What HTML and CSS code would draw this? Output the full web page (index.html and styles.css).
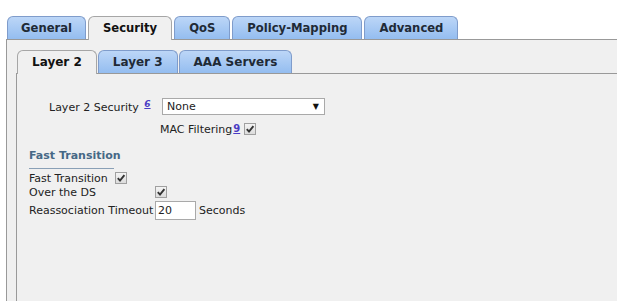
FILE: index.html
```html
<!DOCTYPE html>
<html>
<head>
<meta charset="utf-8">
<link rel="stylesheet" href="styles.css">
</head>
<body>
<div class="page">
  <div class="tabs">
    <div class="tab">General</div>
    <div class="tab active">Security</div>
    <div class="tab">QoS</div>
    <div class="tab">Policy-Mapping</div>
    <div class="tab">Advanced</div>
  </div>
  <div class="panel">
    <div class="tabs sub">
      <div class="tab active">Layer 2</div>
      <div class="tab">Layer 3</div>
      <div class="tab">AAA Servers</div>
    </div>
    <div class="panel inner">
      <div class="row sec-row">
        <span class="lbl">Layer 2 Security <a class="ref">6</a></span>
        <div class="select"><span>None</span><span class="arrow">&#9660;</span></div>
      </div>
      <div class="row mac-row">
        <span>MAC Filtering<a class="ref plain">9</a></span>
        <span class="cb"><svg viewBox="0 0 10 10" width="10" height="10"><path d="M1.8 5.2 L4 7.6 L8.4 2.2" fill="none" stroke="#333" stroke-width="1.9"/></svg></span>
      </div>
      <div class="section">
        <div class="heading">Fast Transition</div>
        <div class="row ft-row">
          <span>Fast Transition</span>
          <span class="cb"><svg viewBox="0 0 10 10" width="10" height="10"><path d="M1.8 5.2 L4 7.6 L8.4 2.2" fill="none" stroke="#333" stroke-width="1.9"/></svg></span>
        </div>
        <div class="grid">
          <span>Over the DS</span>
          <span class="cell"><span class="cb"><svg viewBox="0 0 10 10" width="10" height="10"><path d="M1.8 5.2 L4 7.6 L8.4 2.2" fill="none" stroke="#333" stroke-width="1.9"/></svg></span></span>
          <span>Reassociation Timeout</span>
          <span class="cell"><span class="input">20</span><span class="unit">Seconds</span></span>
        </div>
      </div>
    </div>
  </div>
</div>
</body>
</html>
```

FILE: styles.css
```css
html, body {
  margin: 0;
  background: #ffffff;
  height: 100%;
  overflow: hidden;
}
body {
  font-family: "DejaVu Sans", Verdana, sans-serif;
  font-size: 11px;
  color: #222;
}
.page {
  padding: 16px 0 0 6px;
  height: 100%;
  box-sizing: border-box;
  display: flex;
  flex-direction: column;
}
.tabs {
  display: flex;
  gap: 2px;
  padding-left: 1px;
  height: 23px;
  position: relative;
  z-index: 1;
}
.tab {
  box-sizing: border-box;
  height: 23px;
  padding: 0 14px;
  border: 1px solid #7f9ccb;
  border-bottom: none;
  border-radius: 6px 6px 0 0;
  background: linear-gradient(#bcd6f7, #94bdf0);
  font-weight: bold;
  font-size: 11.6px;
  line-height: 22px;
  color: #1f2a36;
  white-space: nowrap;
}
.tab:first-child {
  padding: 0 13px;
}
.tab.active {
  background: #f0f0f0;
  border-color: #a6a6a6;
  height: 24px;
  color: #111;
}
.panel {
  flex: 1;
  background: #f0f0f0;
  border-top: 1px solid #999;
  border-left: 1px solid #999;
  padding: 10px 0 0 9px;
  display: flex;
  flex-direction: column;
}
.sub {
  gap: 1px;
}
.sub .tab {
  padding: 0 14px;
  font-size: 12px;
}
.panel.inner {
  padding: 24px 0 0 0;
  display: block;
}
.row {
  display: flex;
  align-items: center;
}
.sec-row {
  padding-left: 32px;
  height: 17px;
}
.lbl {
  width: 113px;
}
.ref {
  color: #4b3cc4;
  text-decoration: underline;
  font-weight: bold;
  font-style: italic;
  font-size: 9px;
  vertical-align: 4px;
  margin-left: 2px;
}
.ref.plain {
  font-style: normal;
  vertical-align: 1px;
  margin-left: 1px;
  font-size: 10px;
}
.select {
  box-sizing: border-box;
  width: 163px;
  height: 17px;
  background: #fff;
  border: 1px solid #a9a9a9;
  display: flex;
  align-items: center;
  justify-content: space-between;
  padding: 0 5px 0 4px;
  font-size: 11px;
}
.arrow {
  font-size: 8px;
  color: #111;
}
.mac-row {
  padding-left: 143px;
  margin-top: 6px;
  height: 16px;
}
.cb {
  box-sizing: border-box;
  display: inline-flex;
  align-items: center;
  justify-content: center;
  width: 12px;
  height: 12px;
  border: 1px solid #a0a0a0;
  background: linear-gradient(#f4f4f4, #dcdcdc);
}
.mac-row .cb {
  margin-left: 4px;
}
.section {
  padding-left: 12px;
  margin-top: 12px;
}
.heading {
  display: inline-block;
  font-weight: bold;
  color: #466886;
  padding-bottom: 5px;
  width: 85px;
  border-bottom: 1px solid #8aa0b6;
  white-space: nowrap;
  line-height: 14px;
}
.ft-row {
  margin-top: 2px;
  height: 14px;
}
.ft-row .cb {
  margin-left: 7px;
}
.grid {
  display: grid;
  grid-template-columns: 126px auto;
  grid-auto-rows: auto;
  align-items: center;
}
.grid > span:nth-child(1), .grid > span:nth-child(2) {
  height: 14px;
  display: flex;
  align-items: center;
}
.cell {
  display: flex;
  align-items: center;
}
.grid > .cell:nth-child(4) {
  margin-top: 2px;
}
.grid > span:nth-child(3) {
  margin-top: 2px;
}
.input {
  box-sizing: border-box;
  width: 41px;
  height: 19px;
  background: #fff;
  border: 1px solid #a9a9a9;
  padding-left: 2px;
  line-height: 17px;
  font-size: 11px;
}
.unit {
  margin-left: 3px;
}
```
